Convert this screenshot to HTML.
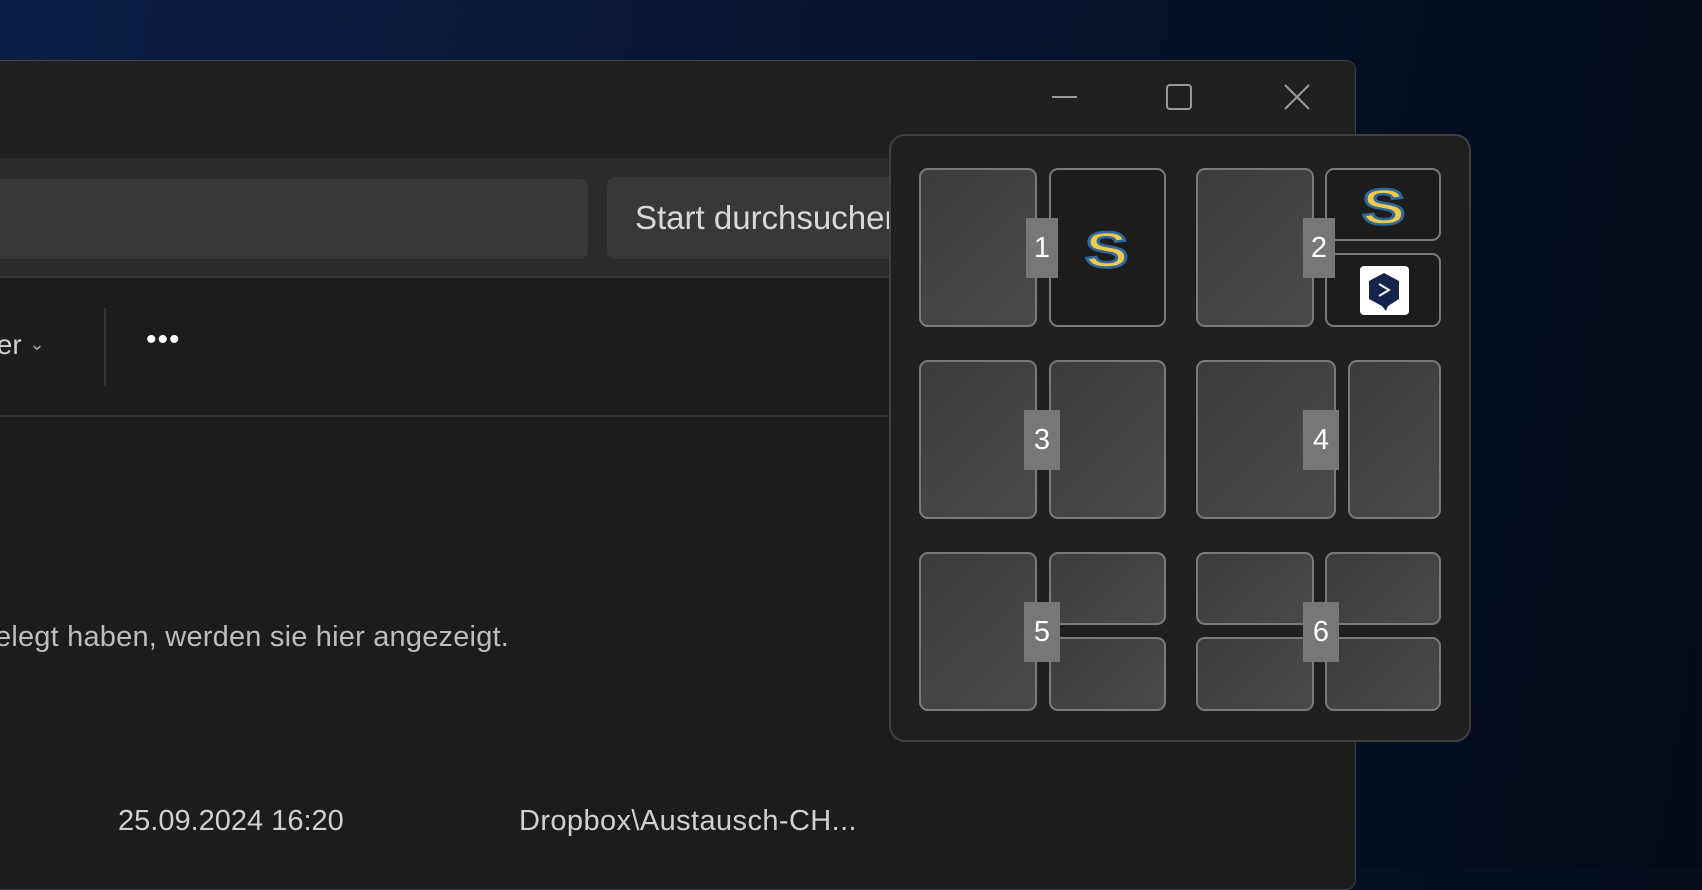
<!DOCTYPE html>
<html><head><meta charset="utf-8"><style>
*{margin:0;padding:0;box-sizing:border-box}
body{width:1702px;height:868px;overflow:hidden;position:relative;font-family:"Segoe UI","Liberation Sans",sans-serif;background:linear-gradient(100deg,#0b1f45 0%,#07142e 50%,#040a1a 100%)}
.win{position:absolute;left:-20px;top:60px;width:1376px;height:830px;background:#1c1c1c;border:1px solid #3a3f48;border-radius:10px;overflow:hidden}
.title{position:absolute;left:0;top:0;width:100%;height:97px;background:#202020}
.addr{position:absolute;left:0;top:97px;width:100%;height:120px;background:#2b2b2b;border-bottom:2px solid #3a3a3a}
.box1{position:absolute;left:0;top:21px;width:607px;height:80px;background:#383838;border-radius:8px}
.box2{position:absolute;left:626px;top:19px;width:400px;height:82px;background:#383838;border-radius:8px;color:#d8d8d8;font-size:33px;line-height:82px;padding-left:28px;white-space:nowrap}
.t{position:absolute;color:#cfcfcf;white-space:nowrap}
.pop{position:absolute;left:889px;top:134px;width:582px;height:608px;background:#202020;border:2px solid #404040;border-radius:16px}
.p{position:absolute;border:2px solid #7a7a7a;border-radius:9px;background:linear-gradient(135deg,#3c3c3c,#4a4a4a)}
.d{background:#1c1c1c}
.b{position:absolute;background:#777;color:#fff;font-size:29px;text-align:center;line-height:60px;width:32px;height:60px}
.S{position:absolute;font-family:"Liberation Sans",sans-serif;font-weight:bold;font-size:50px;color:#f2c94c;-webkit-text-stroke:2.5px #2f6a9a;line-height:1;transform:scaleX(1.3);transform-origin:left top}
</style></head><body>
<div class="win">
 <div class="title"><svg style="position:absolute;left:1071px;top:21px;z-index:5" width="260" height="30" fill="none" stroke="#9a9a9a" stroke-width="2"><line x1="0" y1="15" x2="25" y2="15"/><rect x="115" y="3" width="24" height="24" rx="3"/><line x1="233" y1="3" x2="257" y2="27"/><line x1="257" y1="3" x2="233" y2="27"/></svg></div>
 <div class="addr"><div class="box1"></div><div class="box2">Start durchsuchen</div></div>
 <div class="t" style="left:8px;top:268px;font-size:28px">ter <span style="font-size:18px;color:#aaa;position:relative;top:-4px">&#8964;</span></div>
 <div style="position:absolute;left:123px;top:247px;width:2px;height:78px;background:#333"></div>
 <div class="t" style="left:165px;top:262px;font-size:30px;color:#fff;letter-spacing:1px">&bull;&bull;&bull;</div>
 <div style="position:absolute;left:0;top:354px;width:100%;height:2px;background:#333"></div>
 <div class="t" style="left:14px;top:560px;font-size:29px;color:#bdbdbd;letter-spacing:0.2px">elegt haben, werden sie hier angezeigt.</div>
 <div class="t" style="left:137px;top:744px;font-size:29px;color:#d0d0d0">25.09.2024 16:20</div>
 <div class="t" style="left:538px;top:744px;font-size:29px;color:#d0d0d0;letter-spacing:0.4px">Dropbox\Austausch-CH...</div>
</div>
<div class="pop">
 <div class="p" style="left:28px;top:32px;width:118px;height:159px"></div>
 <div class="p d" style="left:158px;top:32px;width:117px;height:159px"></div>
 <div class="S" style="left:194px;top:89px">S</div>
 <div class="b" style="left:135px;top:82px">1</div>
 <div class="p" style="left:305px;top:32px;width:118px;height:159px"></div>
 <div class="p d" style="left:434px;top:32px;width:116px;height:73px"></div>
 <div class="p d" style="left:434px;top:117px;width:116px;height:74px"></div>
 <div class="S" style="left:471px;top:46px">S</div>
 <div style="position:absolute;left:469px;top:130px;width:49px;height:49px;background:#fff;border-radius:4px"><svg width="49" height="49"><polygon points="24,7 39,15 39,33 28,40 26,45 22,40 9,33 9,15" fill="#13254a"/><path d="M19 18 L29 24 L19 30" stroke="#fff" stroke-width="2" fill="none"/></svg></div>
 <div class="b" style="left:412px;top:82px">2</div>
 <div class="p" style="left:28px;top:224px;width:118px;height:159px"></div>
 <div class="p" style="left:158px;top:224px;width:117px;height:159px"></div>
 <div class="b" style="left:133px;top:274px;width:36px">3</div>
 <div class="p" style="left:305px;top:224px;width:140px;height:159px"></div>
 <div class="p" style="left:457px;top:224px;width:93px;height:159px"></div>
 <div class="b" style="left:412px;top:274px;width:36px">4</div>
 <div class="p" style="left:28px;top:416px;width:118px;height:159px"></div>
 <div class="p" style="left:158px;top:416px;width:117px;height:73px"></div>
 <div class="p" style="left:158px;top:501px;width:117px;height:74px"></div>
 <div class="b" style="left:133px;top:466px;width:36px">5</div>
 <div class="p" style="left:305px;top:416px;width:118px;height:73px"></div>
 <div class="p" style="left:434px;top:416px;width:116px;height:73px"></div>
 <div class="p" style="left:305px;top:501px;width:118px;height:74px"></div>
 <div class="p" style="left:434px;top:501px;width:116px;height:74px"></div>
 <div class="b" style="left:412px;top:466px;width:36px">6</div>
</div>
</body></html>
